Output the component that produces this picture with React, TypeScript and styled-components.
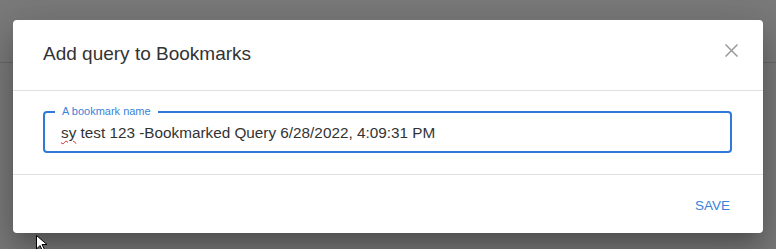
import React from "react";
import styled, { createGlobalStyle } from "styled-components";

const Global = createGlobalStyle`
  html, body { margin: 0; padding: 0; }
  body { font-family: "Liberation Sans", Arial, sans-serif; background: #ffffff; }
  #root { width: 776px; height: 249px; position: relative; overflow: hidden; }
`;

const Page = styled.div`
  width: 776px;
  height: 249px;
  background: #ffffff;
`;

const PageHeader = styled.div`
  height: 62px;
  border-bottom: 1px solid #dcdcdc;
`;

const Backdrop = styled.div`
  position: absolute;
  inset: 0;
  background: rgba(0, 0, 0, 0.52);
  padding: 20px 13px 0 13px;
`;

const Dialog = styled.div`
  width: 750px;
  height: 213px;
  background: #ffffff;
  border-radius: 4px;
  box-shadow: 0px 11px 15px -7px rgba(0, 0, 0, 0.2),
    0px 24px 38px 3px rgba(0, 0, 0, 0.14), 0px 9px 46px 8px rgba(0, 0, 0, 0.12);
  display: flex;
  flex-direction: column;
`;

const Header = styled.div`
  height: 71px;
  box-sizing: border-box;
  padding: 0 25px 1px 30px;
  display: flex;
  align-items: center;
  justify-content: space-between;
  border-bottom: 1px solid #e0e0e0;
`;

const Title = styled.h2`
  margin: 0;
  font-size: 19px;
  font-weight: 400;
  color: #333333;
  margin-top: -1px;
`;

const CloseButton = styled.button`
  border: 0;
  background: transparent;
  padding: 0;
  width: 13px;
  height: 13px;
  margin-top: -8px;
  display: flex;
  align-items: center;
  justify-content: center;
  cursor: pointer;
`;

const Content = styled.div`
  height: 84px;
  box-sizing: border-box;
  padding: 20px 31px 0 30px;
  border-bottom: 1px solid #e0e0e0;
`;

const Field = styled.div`
  position: relative;
  height: 42px;
  box-sizing: border-box;
  border: 2px solid #3079d6;
  border-radius: 4px;
  display: flex;
  align-items: center;
  padding: 2px 16px 0 16px;
`;

const Legend = styled.span`
  position: absolute;
  left: 10px;
  top: -8px;
  padding: 0 7px;
  background: #ffffff;
  font-size: 11px;
  line-height: 13px;
  color: #3a83d8;
`;

const Value = styled.div`
  font-size: 15.3px;
  color: #333333;
  white-space: nowrap;
`;

const Misspelled = styled.span`
  text-decoration: underline wavy #e02020;
  text-decoration-thickness: 1px;
  text-underline-offset: 2px;
`;

const Footer = styled.div`
  flex: 1;
  display: flex;
  align-items: center;
  justify-content: flex-end;
  padding: 0 33px 0 30px;
`;

const SaveButton = styled.button`
  border: 0;
  background: transparent;
  padding: 0;
  font-family: "Liberation Sans", Arial, sans-serif;
  font-size: 13.5px;
  color: #3a83d8;
  text-transform: uppercase;
  margin-top: 2px;
  cursor: pointer;
`;

const Pointer = styled.svg`
  position: absolute;
  left: 36px;
  top: 235px;
`;

export default function App() {
  return (
    <>
      <Global />
      <Page>
        <PageHeader />
      </Page>
      <Backdrop>
        <Dialog>
          <Header>
            <Title>Add query to Bookmarks</Title>
            <CloseButton aria-label="close">
              <svg width="13" height="13" viewBox="0 0 13 13">
                <path d="M0.5 0.5 L12.5 12.5 M12.5 0.5 L0.5 12.5" stroke="#9a9a9a" strokeWidth="1.5" />
              </svg>
            </CloseButton>
          </Header>
          <Content>
            <Field>
              <Legend>A bookmark name</Legend>
              <Value>
                <Misspelled>sy</Misspelled> test 123 -Bookmarked Query 6/28/2022, 4:09:31 PM
              </Value>
            </Field>
          </Content>
          <Footer>
            <SaveButton>Save</SaveButton>
          </Footer>
        </Dialog>
      </Backdrop>
      <Pointer width="12" height="16" viewBox="0 0 12 16">
        <path d="M0.5 0.5 L0.5 14 L4 10.5 L6.5 15.5 L8.5 14.5 L6 9.5 L11 9.5 Z" fill="#ffffff" stroke="#000000" strokeWidth="1" />
      </Pointer>
    </>
  );
}
